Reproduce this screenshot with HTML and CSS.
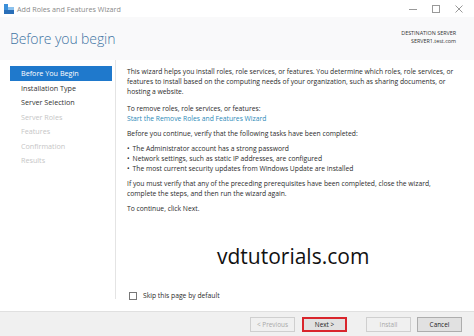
FILE: index.html
```html
<!DOCTYPE html>
<html>
<head>
<meta charset="utf-8">
<link rel="stylesheet" href="styles.css">
</head>
<body>
<div class="window">
  <div class="titlebar">
    <svg class="appicon" width="10" height="10" viewBox="0 0 10 10">
      <rect x="0" y="0" width="4" height="6" fill="#3b8fd9"/>
      <rect x="0" y="6" width="10" height="4" fill="#2a6fb8"/>
      <rect x="4" y="3" width="6" height="3" fill="#8cc2ee"/>
    </svg>
    <span class="wtitle">Add Roles and Features Wizard</span>
    <div class="controls">
      <span class="ctl"><svg width="8" height="8" viewBox="0 0 8 8"><line x1="0" y1="4.5" x2="8" y2="4.5" stroke="#999" stroke-width="1"/></svg></span>
      <span class="ctl"><svg width="8" height="8" viewBox="0 0 8 8"><rect x="0.5" y="0.5" width="7" height="7" fill="none" stroke="#999" stroke-width="1"/></svg></span>
      <span class="ctl"><svg width="8" height="8" viewBox="0 0 8 8"><path d="M0.5 0.5L7.5 7.5M7.5 0.5L0.5 7.5" stroke="#999" stroke-width="1"/></svg></span>
    </div>
  </div>
  <div class="header">
    <h1 class="pagetitle">Before you begin</h1>
    <div class="dest">DESTINATION SERVER<br>SERVER1.test.com</div>
  </div>
  <div class="main">
    <nav class="nav">
      <div class="navitem active">Before You Begin</div>
      <div class="navitem">Installation Type</div>
      <div class="navitem">Server Selection</div>
      <div class="navitem disabled">Server Roles</div>
      <div class="navitem disabled">Features</div>
      <div class="navitem disabled">Confirmation</div>
      <div class="navitem disabled">Results</div>
    </nav>
    <div class="content">
      <p>This wizard helps you install roles, role services, or features. You determine which roles, role services, or<br>features to install based on the computing needs of your organization, such as sharing documents, or<br>hosting a website.</p>
      <p class="gap">To remove roles, role services, or features:<br><span class="link">Start the Remove Roles and Features Wizard</span></p>
      <p>Before you continue, verify that the following tasks have been completed:</p>
      <ul class="bullets">
        <li>The Administrator account has a strong password</li>
        <li>Network settings, such as static IP addresses, are configured</li>
        <li>The most current security updates from Windows Update are installed</li>
      </ul>
      <p>If you must verify that any of the preceding prerequisites have been completed, close the wizard,<br>complete the steps, and then run the wizard again.</p>
      <p>To continue, click Next.</p>
      <div class="watermark">vdtutorials.com</div>
      <div class="skip"><span class="checkbox"></span>Skip this page by default</div>
    </div>
  </div>
  <div class="footer">
    <span class="btn disabled prev">&lt; Previous</span>
    <span class="btn next">Next &gt;</span>
    <span class="btn disabled install">Install</span>
    <span class="btn">Cancel</span>
  </div>
</div>
</body>
</html>
```
FILE: styles.css
```css
* { box-sizing: border-box; }
html, body { margin: 0; padding: 0; background: #fff; }
body { font-family: "Open Sans", "Noto Sans", sans-serif; color: #2b2b2b; }
.window { width: 474px; height: 336px; display: flex; flex-direction: column; background: #fff; overflow: hidden; }

.titlebar { height: 17px; display: flex; align-items: center; padding-left: 4px; background: #fff; }
.appicon { display: block; margin-right: 3px; }
.wtitle { font-size: 7.2px; color: #8a8a8a; }
.controls { margin-left: auto; display: flex; align-items: center; gap: 15px; padding-right: 11px; }
.ctl { display: flex; }

.header { height: 43px; background: #f9f9fa; display: flex; justify-content: space-between; align-items: center; padding: 0 18px 0 10px; }
.pagetitle { margin: 0; font-weight: 300; font-size: 14px; color: #3f74a3; letter-spacing: -0.1px; }
.dest { font-size: 5.4px; line-height: 7.5px; text-align: right; color: #333; margin-top: -2px; }

.main { flex: 1; display: flex; }
.nav { width: 116px; padding: 6px 3px 0 10px; border-right: 1px solid #e4e4e4; margin-bottom: 12px; }
.navitem { height: 14.5px; line-height: 14.5px; font-size: 7.2px; padding-left: 11px; color: #333; }
.navitem.active { background: #1f79cc; color: #fff; }
.navitem.disabled { color: #c6c6c6; }

.content { flex: 1; padding: 7px 0 0 11px; font-size: 6.75px; line-height: 10px; color: #2b2b2b; display: flex; flex-direction: column; }
.content p { margin: 0 0 5px 0; white-space: nowrap; }
.content p.gap { margin-top: 2px; }
.link { color: #2c8ab8; }
.bullets { list-style: none; margin: 0 0 5px 0; padding: 0; }
.bullets li::before { content: "\2022"; margin-right: 3px; }
.watermark { font-size: 21px; color: #111; margin: 22px 0 0 90px; line-height: 30px; }
.skip { display: flex; align-items: center; margin-top: 20px; margin-left: 2px; font-size: 6.75px; }
.checkbox { width: 8px; height: 8px; border: 1px solid #777; margin-right: 6px; background: #fff; }

.footer { height: 25px; background: #f0f0f0; border-top: 1px solid #e0e0e0; display: flex; align-items: center; justify-content: flex-end; padding-right: 12px; gap: 6px; }
.btn { width: 45px; height: 15px; display: flex; align-items: center; justify-content: center; font-size: 6.4px; background: #e1e1e1; border: 1px solid #adadad; color: #222; }
.btn.disabled { background: #f0f0f0; border-color: #cfcfcf; color: #a8a8a8; }
.btn.prev { margin-right: 1px; }
.btn.next { border: 2px solid #d9252c; background: #e1e1e1; }
.btn.install { margin-left: 13px; }
```
